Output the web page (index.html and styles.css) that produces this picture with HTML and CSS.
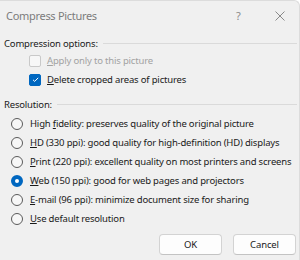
FILE: index.html
```html
<!DOCTYPE html>
<html>
<head>
<meta charset="utf-8">
<link rel="stylesheet" href="styles.css">
</head>
<body>
<div class="window">
  <div class="titlebar">
    <span class="title">Compress Pictures</span>
    <span class="help">?</span>
    <span class="close"><svg width="10" height="10" viewBox="0 0 10 10"><path d="M0.5 0.5L9.5 9.5M9.5 0.5L0.5 9.5" stroke="#8a8a8a" stroke-width="1"/></svg></span>
  </div>
  <div class="content">
    <div class="group-head"><span>Compression options:</span><span class="rule"></span></div>
    <div class="checks">
      <div class="row disabled"><span class="cb"></span><span><u>A</u>pply only to this picture</span></div>
      <div class="row"><span class="cb on"><svg width="11" height="11" viewBox="0 0 11 11"><path d="M3 5.8L4.7 7.4L8.2 3.8" fill="none" stroke="#fff" stroke-width="1"/></svg></span><span><u>D</u>elete cropped areas of pictures</span></div>
    </div>
    <div class="group-head second"><span>Resolution:</span><span class="rule"></span></div>
    <div class="radios">
      <div class="row"><span class="rb"></span><span>High <u>f</u>idelity: preserves quality of the original picture</span></div>
      <div class="row"><span class="rb"></span><span><u>H</u>D (330 ppi): good quality for high-definition (HD) displays</span></div>
      <div class="row"><span class="rb"></span><span><u>P</u>rint (220 ppi): excellent quality on most printers and screens</span></div>
      <div class="row"><span class="rb on"></span><span><u>W</u>eb (150 ppi): good for web pages and projectors</span></div>
      <div class="row"><span class="rb"></span><span><u>E</u>-mail (96 ppi): minimize document size for sharing</span></div>
      <div class="row"><span class="rb"></span><span><u>U</u>se default resolution</span></div>
    </div>
    <div class="buttons">
      <button class="btn">OK</button>
      <button class="btn">Cancel</button>
    </div>
  </div>
</div>
</body>
</html>
```
FILE: styles.css
```css
html, body {
  margin: 0;
  padding: 0;
  background: #ffffff;
}
.window {
  width: 299px;
  height: 259px;
  background: #f0f0f0;
  border-top: 1px solid #dcdcdc;
  border-right: 1px solid #dcdcdc;
  border-top-right-radius: 6px;
  overflow: hidden;
  font-family: "Noto Sans", "Open Sans", sans-serif;
  font-size: 9.5px;
  letter-spacing: -0.18px;
  color: #1a1a1a;
  white-space: nowrap;
}
.titlebar {
  height: 29px;
  display: flex;
  align-items: center;
  padding-left: 6px;
}
.title {
  font-size: 11px;
  letter-spacing: -0.3px;
  color: #7c7c7c;
  flex: 1;
}
.help {
  font-size: 11px;
  color: #8a8a8a;
  width: 10px;
  margin-right: 29px;
}
.close {
  display: flex;
  width: 10px;
  margin-right: 14px;
}
.content {
  padding: 0 2px 0 4px;
}
.group-head {
  display: flex;
  align-items: center;
  height: 16px;
  margin-top: 5px;
}
.group-head.second {
  margin-top: 7px;
}
.rule {
  flex: 1;
  height: 1px;
  background: #dadada;
  margin-left: 5px;
}
.checks {
  padding-left: 25px;
}
.radios {
  margin-top: 2px;
  padding-left: 7px;
}
.row {
  height: 19px;
  display: flex;
  align-items: center;
}
.row u {
  text-decoration-thickness: 1px;
  text-underline-offset: 1px;
}
.disabled {
  color: #a2a2a2;
}
.cb {
  width: 10px;
  height: 10px;
  border: 1px solid #c9c9c9;
  border-radius: 2px;
  background: #f7f7f7;
  margin-right: 6px;
  display: flex;
  box-sizing: content-box;
  flex: none;
}
.cb.on {
  background: #0067c0;
  border-color: #0067c0;
}
.cb.on svg {
  margin: -0.5px;
}
.rb {
  width: 10px;
  height: 10px;
  border: 1px solid #5a5a5a;
  border-radius: 50%;
  margin-right: 7px;
  flex: none;
  box-sizing: content-box;
  background: #f7f7f7;
}
.rb.on {
  width: 4px;
  height: 4px;
  border: 4px solid #0067c0;
  background: #ffffff;
}
.buttons {
  display: flex;
  justify-content: flex-end;
  gap: 11px;
  margin-top: 6px;
  padding-right: 1px;
}
.btn {
  width: 63px;
  height: 21px;
  background: #fdfdfd;
  border: 1px solid #d3d3d3;
  border-bottom-color: #c3c3c3;
  border-radius: 4px;
  font-family: "Noto Sans", "Open Sans", sans-serif;
  font-size: 9.5px;
  letter-spacing: -0.1px;
  color: #1a1a1a;
  padding: 0;
}
```
